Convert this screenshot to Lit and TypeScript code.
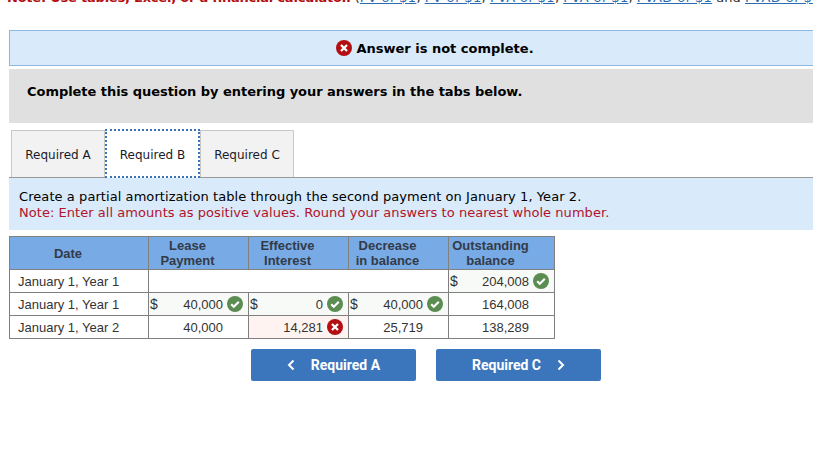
import { LitElement, html, css } from "lit";
import { customElement } from "lit/decorators.js";

const ok = html`<svg class="ic" viewBox="0 0 16 16"><circle cx="8" cy="8" r="8" fill="#5b8c51"/><path d="M4.2 8.3l2.600 2.500 5-5" fill="none" stroke="#fff" stroke-width="2.200"/></svg>`;
const bad = html`<svg class="ic" viewBox="0 0 16 16"><circle cx="8" cy="8" r="8" fill="#b30f12"/><path d="M5 5l6 6M11 5l-6 6" fill="none" stroke="#fff" stroke-width="2.300"/></svg>`;

@customElement("app-root")
export class AppRoot extends LitElement {
  static styles = css`
    :host { display: block; width: 813px; height: 476px; overflow: hidden; background: #fff; font-family: "DejaVu Sans", Verdana, sans-serif; color: #000; }
    .clip { height: 6px; overflow: hidden; white-space: nowrap; margin-bottom: 24px; }
    .clip div { font-size: 13px; line-height: 16px; color: #333; margin: -10px 0 0 7px; }
    .clip b { color: #b30f12; letter-spacing: -0.22px; margin-right: 4px; }
    .clip a { color: #2b6cb0; text-decoration: underline; letter-spacing: 0.36px; }
    .wrap { margin-left: 9px; }
    .banner { height: 36px; box-sizing: border-box; border: 1px solid #8db7e0; border-right: none; background: #d9eafa; display: flex; align-items: center; justify-content: center; gap: 4px; font-weight: 700; font-size: 13px; padding-left: 47px; margin-bottom: 3px; }
    .banner .ic { width: 16px; height: 16px; }
    .prompt { height: 54px; box-sizing: border-box; background: #e0e0e0; padding: 15px 18px; font-weight: 700; font-size: 13px; line-height: 16px; letter-spacing: -0.045px; margin-bottom: 7px; }
    .tabs { display: flex; margin-left: 2px; height: 47px; }
    .tab { width: 94px; box-sizing: border-box; border: 1px solid #c8c8c8; border-bottom: none; background: #f2f2f2; font-size: 12px; color: #1a1a2a; display: flex; align-items: center; justify-content: center; padding-top: 2px; }
    .tab.active { width: 95px; background: #fff; border: 2px dotted #3a74b8; height: 49px; margin-top: -1px; position: relative; z-index: 1; padding-top: 3px; }
    .panel { height: 53px; box-sizing: border-box; border-top: 1px solid #999; background: #d9eafa; padding: 11px 10px 0; font-size: 13px; line-height: 16px; letter-spacing: 0.07px; margin-bottom: 6px; }
    .note { color: #b3132b; letter-spacing: 0.045px; }
    table { border-collapse: collapse; table-layout: fixed; width: 546px; font: 13px/15px "Liberation Sans", Arial, sans-serif; color: #333; }
    th, td { border: 1px solid #808080; padding: 0; }
    th { background: #78abe5; font-weight: 700; height: 32px; padding-right: 22px; color: #333a48; }
    td { height: 22px; text-align: center; }
    td.date { text-align: left; padding-left: 8px; }
    .cell { display: flex; align-items: center; justify-content: flex-end; padding: 0 5px 0 2px; position: relative; height: 22px; }
    .cell .d { position: absolute; left: 1px; font-size: 14px; }
    .cell .ic { width: 16px; height: 16px; margin-left: 4px; flex: none; }
    td.padb { padding-right: 25px; text-align: right; }
    td.g { background: #f7faf6; }
    td.r { background: #fff3f1; }
    .btns { display: flex; gap: 20px; margin: 10px 0 0 242px; }
    .btn { width: 165px; height: 32px; border-radius: 2px; background: #3b76bc; color: #fff; font: 700 14px "Roboto", sans-serif; display: flex; align-items: center; justify-content: center; gap: 16px; }
    .btn svg { width: 8px; height: 12px; }
  `;
  render() {
    return html`
      <div class="clip"><div><b>Note: Use tables, Excel, or a financial calculator.</b>(<a>FV of $1</a>, <a>PV of $1</a>, <a>FVA of $1</a>, <a>PVA of $1</a>, <a>FVAD of $1</a> and <a>PVAD of $1</a>)</div></div>
      <div class="wrap">
        <div class="banner">${bad}<span>Answer is not complete.</span></div>
        <div class="prompt">Complete this question by entering your answers in the tabs below.</div>
        <div class="tabs">
          <div class="tab">Required A</div>
          <div class="tab active">Required B</div>
          <div class="tab">Required C</div>
        </div>
        <div class="panel">Create a partial amortization table through the second payment on January 1, Year 2.<br /><span class="note">Note: Enter all amounts as positive values. Round your answers to nearest whole number.</span></div>
        <table>
          <colgroup><col style="width:139px" /><col style="width:100px" /><col style="width:100px" /><col style="width:100px" /><col style="width:106px" /></colgroup>
          <tr><th>Date</th><th>Lease<br />Payment</th><th>Effective<br />Interest</th><th>Decrease<br />in balance</th><th>Outstanding<br />balance</th></tr>
          <tr><td class="date">January 1, Year 1</td><td colspan="3"></td><td class="g"><div class="cell"><span class="d">$</span>204,008${ok}</div></td></tr>
          <tr><td class="date">January 1, Year 1</td><td class="g"><div class="cell"><span class="d">$</span>40,000${ok}</div></td><td class="g"><div class="cell"><span class="d">$</span>0${ok}</div></td><td class="g"><div class="cell"><span class="d">$</span>40,000${ok}</div></td><td class="padb">164,008</td></tr>
          <tr><td class="date">January 1, Year 2</td><td class="padb">40,000</td><td class="r"><div class="cell">14,281${bad}</div></td><td class="padb">25,719</td><td class="padb">138,289</td></tr>
        </table>
        <div class="btns">
          <div class="btn"><svg viewBox="0 0 8 12"><path d="M6.500 1.500L2 6l4.500 4.500" fill="none" stroke="#fff" stroke-width="2"/></svg><span>Required A</span></div>
          <div class="btn"><span>Required C</span><svg viewBox="0 0 8 12"><path d="M1.500 1.500L6 6l-4.500 4.500" fill="none" stroke="#fff" stroke-width="2"/></svg></div>
        </div>
      </div>
    `;
  }
}
